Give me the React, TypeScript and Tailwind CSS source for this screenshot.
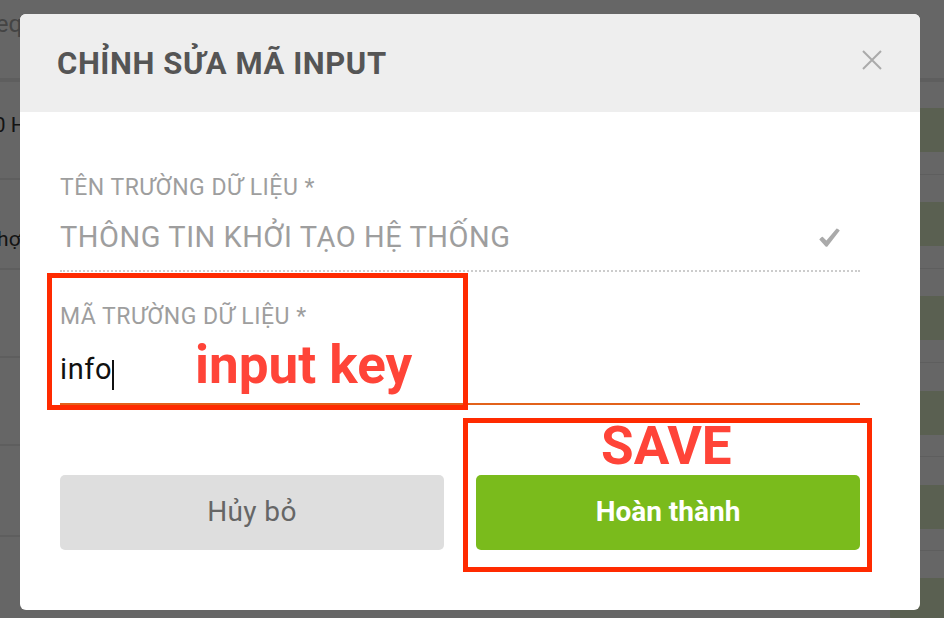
import React from "react";

const leftRows = [
  { cls: "h-[98px] pt-[30px]", text: "10 Hồ sơ khách hàng", shift: "-ml-[18px]" },
  { cls: "h-[90px] pt-[46px]", text: "Tổng hợp dữ liệu", shift: "-ml-[55px]" },
  { cls: "h-[88px]", text: "", shift: "" },
  { cls: "h-[88px]", text: "", shift: "" },
  { cls: "h-[91px]", text: "", shift: "" },
  { cls: "h-[90px]", text: "", shift: "" },
];

const rightRows = ["h-[93px] pt-[26px]", "h-[94px] pt-[27px]", "h-[94px] pt-[27px]", "h-[94px] pt-[28px]", "h-[94px] pt-[28px]", "h-[94px] pt-[27px]"];

function BackgroundPage() {
  return (
    <div className="flex w-full h-full font-[family-name:Roboto,sans-serif]">
      {/* left table (mostly under the modal) */}
      <div className="w-[472px] overflow-hidden">
        <div className="h-[82px] border-b-4 border-[#ececec] pt-[9px]">
          <div className="-ml-[19px] whitespace-nowrap text-[24px] leading-[30px] text-[#aaaaaa]">
            Request code
          </div>
        </div>
        {leftRows.map((row, i) => (
          <div key={i} className={`${row.cls} border-b-2 border-[#ebebeb]`}>
            {row.text && (
              <div className={`${row.shift} whitespace-nowrap text-[21px] leading-[26px] text-[#333333]`}>
                {row.text}
              </div>
            )}
          </div>
        ))}
      </div>

      {/* right table with action buttons */}
      <div className="flex-1 overflow-hidden">
        <div className="h-[82px] border-b-4 border-[#ececec]" />
        {rightRows.map((cls, i) => (
          <div key={i} className={`${cls} border-b border-[#ececec] flex justify-end`}>
            <div className="w-[54px] h-[44px] rounded-l-[6px] bg-[#e2f1cb]" />
          </div>
        ))}
      </div>
    </div>
  );
}

function CheckMark() {
  return (
    <svg width="21" height="19" viewBox="0 0 21 19">
      <path
        d="M0.3 11.6C1.2 10.2 2.6 8.9 3.6 8.8L7.4 12.4L17.6 0.4C18.6 0.6 20.2 1.6 20.8 2.6L8.6 18.2C8.1 18.9 7.2 19 6.6 18.4Z"
        fill="#aaaaaa"
      />
    </svg>
  );
}

function EditInputModal() {
  return (
    <div className="absolute left-[20px] top-[14px] w-[900px] h-[596px] bg-white rounded-[6px] overflow-hidden font-[family-name:Roboto,sans-serif]">
      {/* Header */}
      <div className="h-[98px] bg-[#eeeeee] flex items-center justify-between pl-[37px] pr-[38px]">
        <h2 className="text-[31px] leading-none font-bold text-[#555555] tracking-[0.6px]">CHỈNH SỬA MÃ INPUT</h2>
        <svg width="20" height="20" viewBox="0 0 20 20" className="-mt-[6px]">
          <path d="M1 1L19 19M19 1L1 19" stroke="#aaaaaa" strokeWidth="2" fill="none" />
        </svg>
      </div>

      {/* Form */}
      <div className="pl-[40px] pr-[60px] pt-[63px]">
        <div className="text-[23px] leading-[26px] text-[#9e9e9e] tracking-[0.5px]">TÊN TRƯỜNG DỮ LIỆU *</div>
        <div className="mt-[16px] flex items-center justify-between pb-[13px] border-b-2 border-dotted border-[#cccccc]">
          <span className="text-[29px] leading-[40px] text-[#9e9e9e] tracking-[0.55px]">THÔNG TIN KHỞI TẠO HỆ THỐNG</span>
          <span className="mr-[20px] flex">
            <CheckMark />
          </span>
        </div>

        <div className="mt-[32px] text-[23px] leading-[26px] text-[#9e9e9e] tracking-[0.5px]">MÃ TRƯỜNG DỮ LIỆU *</div>
        <div className="mt-[19px] pb-[13px] border-b-2 border-[#e2621b]">
          <span className="text-[29px] leading-[40px] text-[#111111] tracking-[0.6px]">info</span>
          <span className="inline-block w-[2px] h-[30px] bg-[#111111] align-middle" />
        </div>

        {/* Actions */}
        <div className="mt-[70px] grid grid-cols-2 gap-[32px]">
          <button className="h-[75px] rounded-[5px] bg-[#dedede] flex items-center justify-center text-[28px] text-[#666666] tracking-[0.4px]">
            Hủy bỏ
          </button>
          <button className="h-[75px] rounded-[5px] bg-[#7abb1c] flex items-center justify-center text-[28px] font-bold text-white">
            Hoàn thành
          </button>
        </div>
      </div>

      {/* Annotations */}
      <div className="absolute left-[27px] top-[259px] w-[421px] h-[137px] border-[5px] border-[#ff2a00]" />
      <div className="absolute left-[175px] top-[325px] text-[53px] leading-[53px] font-bold text-[#ff4438] whitespace-nowrap">
        input key
      </div>
      <div className="absolute left-[443px] top-[404px] w-[409px] h-[154px] border-[5px] border-[#ff2a00]" />
      <div className="absolute left-[581px] top-[406px] text-[53px] leading-[53px] font-bold text-[#ff4438]">SAVE</div>
    </div>
  );
}

export default function App() {
  return (
    <div className="relative w-[944px] h-[618px] overflow-hidden bg-white">
      <BackgroundPage />
      <div className="absolute inset-0 bg-black/60" />
      <EditInputModal />
    </div>
  );
}
